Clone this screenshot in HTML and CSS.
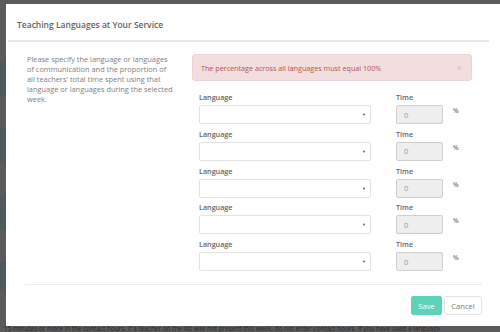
FILE: index.html
```html
<!DOCTYPE html>
<html>
<head>
<meta charset="utf-8">
<link rel="stylesheet" href="styles.css">
</head>
<body>
<div class="page">
  <div class="bg-rows">
    <div class="bg-band b1"></div>
    <div class="bg-band b2"></div>
    <div class="bg-band b3"></div>
    <div class="bg-band b4"></div>
  </div>
  <div class="bg-text">15 minutes or more in the contact hours. If a teacher on the list was not present this week, do not enter contact hours. If you have used a language</div>
</div>
<div class="modal">
  <div class="modal-header">
    <h4 class="modal-title">Teaching Languages at Your Service</h4>
  </div>
  <div class="modal-body">
    <p class="intro">Please specify the language or languages of communication and the proportion of all teachers' total time spent using that language or languages during the selected week.</p>
    <div class="form-col">
      <div class="alert"><span>The percentage across all languages must equal 100%</span><span class="close">×</span></div>
      <div class="rows">
        <div class="row">
          <div class="lang"><label>Language</label><div class="select"><span class="caret">▼</span></div></div>
          <div class="time"><label>Time</label><div class="input">0</div></div>
          <span class="pct">%</span>
        </div>
        <div class="row">
          <div class="lang"><label>Language</label><div class="select"><span class="caret">▼</span></div></div>
          <div class="time"><label>Time</label><div class="input">0</div></div>
          <span class="pct">%</span>
        </div>
        <div class="row">
          <div class="lang"><label>Language</label><div class="select"><span class="caret">▼</span></div></div>
          <div class="time"><label>Time</label><div class="input">0</div></div>
          <span class="pct">%</span>
        </div>
        <div class="row">
          <div class="lang"><label>Language</label><div class="select"><span class="caret">▼</span></div></div>
          <div class="time"><label>Time</label><div class="input">0</div></div>
          <span class="pct">%</span>
        </div>
        <div class="row">
          <div class="lang"><label>Language</label><div class="select"><span class="caret">▼</span></div></div>
          <div class="time"><label>Time</label><div class="input">0</div></div>
          <span class="pct">%</span>
        </div>
      </div>
    </div>
  </div>
  <div class="modal-footer">
    <button class="btn save">Save</button>
    <button class="btn cancel">Cancel</button>
  </div>
</div>
</body>
</html>
```
FILE: styles.css
```css
* { box-sizing: border-box; }
html, body { margin: 0; padding: 0; }
body {
  width: 500px;
  height: 332px;
  overflow: hidden;
  background: #5b5b5b;
  font-family: "Open Sans", "Liberation Sans", sans-serif;
  position: relative;
}
.page {
  width: 500px;
  height: 332px;
  display: flex;
  flex-direction: column;
}
.bg-rows {
  flex: 1;
  display: flex;
  flex-direction: column;
  padding-top: 60px;
  gap: 32px;
}
.bg-band {
  width: 8px;
  height: 36px;
  background: #4f5960;
}
.bg-band.b3 { height: 34px; }
.bg-band.b4 { height: 30px; }
.bg-text {
  height: 8px;
  font-size: 6.4px;
  line-height: 8px;
  color: #2a2a2a;
  white-space: nowrap;
  padding-left: 4px;
  overflow: hidden;
  margin-bottom: -1px;
}
.modal {
  position: absolute;
  left: 6px;
  top: 4px;
  width: 500px;
  height: 322px;
  background: #fff;
  display: flex;
  flex-direction: column;
}
.modal-header {
  height: 38px;
  margin: 0 17px 0 2px;
  border-bottom: 2px solid #e8e8e8;
  padding: 15px 0 0 9px;
}
.modal-title {
  margin: 0;
  font-size: 8.5px;
  line-height: 12px;
  font-weight: 600;
  color: #626262;
}
.modal-body {
  display: flex;
  padding: 12px 0 0 2px;
  height: 243px;
  margin: 0 24px 0 19px;
  border-bottom: 1px solid #ececec;
}
.intro {
  margin: 0;
  width: 146px;
  flex: none;
  font-size: 7.4px;
  line-height: 10px;
  color: #808080;
}
.form-col {
  margin-left: 19px;
  width: 280px;
}
.alert {
  height: 27px;
  background: #f2dede;
  border: 1px solid #ecd3d5;
  border-radius: 3px;
  color: #b15555;
  font-size: 7.2px;
  display: flex;
  align-items: center;
  justify-content: space-between;
  padding: 0 9px 0 8px;
}
.alert .close {
  color: #d8b8b8;
  font-size: 9px;
}
.rows {
  padding: 11px 0 0 7px;
  display: flex;
  flex-direction: column;
  gap: 4.75px;
}
.row {
  display: flex;
  align-items: flex-start;
}
label {
  display: block;
  font-size: 7.2px;
  line-height: 10px;
  font-weight: 600;
  color: #666;
  margin-bottom: 3px;
}
.lang { width: 172px; }
.select {
  height: 19px;
  border: 1px solid #e3e3e3;
  border-radius: 2px;
  background: #fff;
  display: flex;
  align-items: center;
  justify-content: flex-end;
  padding-right: 4px;
}
.caret {
  font-size: 4px;
  color: #555;
}
.time {
  margin-left: 25px;
  width: 47px;
}
.input {
  height: 19px;
  background: #eeeeee;
  border: 1px solid #cfcfcf;
  border-radius: 2px;
  font-size: 7.5px;
  color: #999;
  display: flex;
  align-items: center;
  padding-left: 7px;
}
.pct {
  margin-left: 10px;
  margin-top: 14px;
  font-size: 6.5px;
  font-weight: 600;
  color: #777;
}
.modal-footer {
  display: flex;
  padding: 11px 0 0 405px;
  gap: 2px;
}
.btn {
  font-family: "Open Sans", "Liberation Sans", sans-serif;
  font-size: 7.6px;
  height: 19px;
  border-radius: 2px;
  padding: 0;
}
.save {
  width: 31px;
  background: #5fd3b7;
  border: 1px solid #5fd3b7;
  color: #fff;
}
.cancel {
  width: 38px;
  background: #fff;
  border: 1px solid #e5e5e5;
  color: #777;
}
```
